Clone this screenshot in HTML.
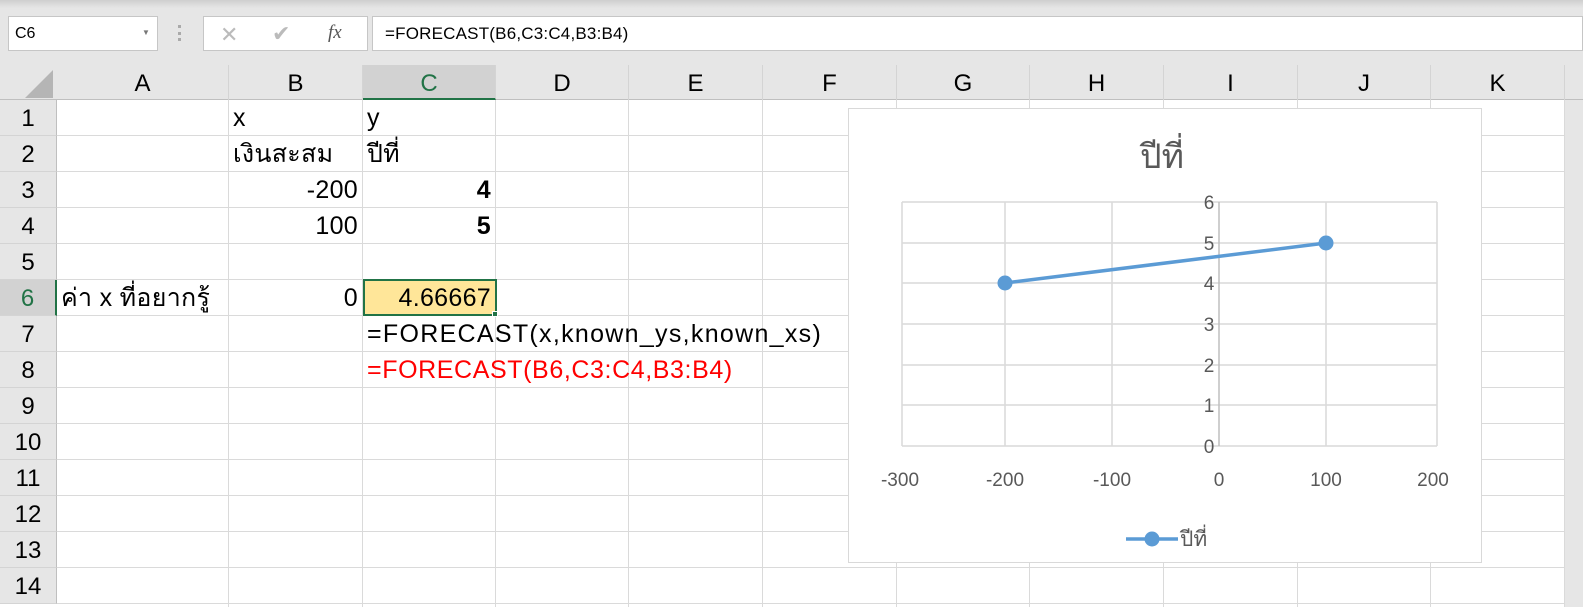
<!DOCTYPE html>
<html><head><meta charset="utf-8"><style>
*{margin:0;padding:0;box-sizing:border-box}
body{width:1583px;height:607px;overflow:hidden;background:#fff;font-family:"Liberation Sans",sans-serif;position:relative}
.a{position:absolute}
.t{position:absolute;font-size:25px;line-height:36px;white-space:nowrap;color:#000;letter-spacing:0.3px}
.ch{position:absolute;top:65px;height:35px;font-size:24px;line-height:37px;text-align:center;color:#000;border-right:1px solid #d4d4d4}
.rh{position:absolute;left:0;width:57px;height:36px;font-size:24px;line-height:37px;text-align:center;background:#e6e6e6;border-bottom:1px solid #d4d4d4;border-right:1px solid #bfbfbf}
</style></head><body>
<div class="a" style="left:0;top:0;width:1583px;height:65px;background:#e6e6e6"></div>
<div class="a" style="left:0;top:0;width:1583px;height:8px;background:linear-gradient(#cfcfcf,#e6e6e6)"></div>
<div class="a" style="left:8px;top:16px;width:150px;height:35px;background:#fff;border:1px solid #c6c6c6;font-size:16px;line-height:33px;padding-left:6px">C6<span style="position:absolute;left:133px;top:-1px;font-size:8px;color:#777">▼</span></div>
<div class="a" style="left:178px;top:25px;width:3px;height:16px;border-left:3px dotted #aaa"></div>
<div class="a" style="left:203px;top:16px;width:165px;height:35px;background:#fff;border:1px solid #c6c6c6"></div>
<div class="a" style="left:220px;top:22px;font-size:22px;color:#bbb">✕</div>
<div class="a" style="left:272px;top:21px;font-size:22px;color:#bbb">✔</div>
<div class="a" style="left:328px;top:22px;font-family:'Liberation Serif',serif;font-style:italic;font-size:19px;color:#555">fx</div>
<div class="a" style="left:372px;top:16px;width:1211px;height:35px;background:#fff;border:1px solid #c6c6c6;font-size:17px;line-height:33px;padding-left:12px;letter-spacing:0.2px">=FORECAST(B6,C3:C4,B3:B4)</div>
<div class="a" style="left:0;top:65px;width:1583px;height:35px;background:#e6e6e6;border-bottom:1px solid #bfbfbf"></div>
<div class="a" style="left:1565px;top:100px;width:18px;height:507px;background:#e6e6e6"></div>
<svg class="a" style="left:20px;top:70px" width="34" height="28"><polygon points="33,0 33,28 5,28" fill="#b5b5b5"/></svg>
<div class="ch" style="left:57px;width:172px">A</div>
<div class="ch" style="left:229px;width:134px">B</div>
<div class="ch" style="left:363px;width:133px;background:#d2d2d2;color:#217346;border-bottom:2px solid #217346">C</div>
<div class="ch" style="left:496px;width:133px">D</div>
<div class="ch" style="left:629px;width:134px">E</div>
<div class="ch" style="left:763px;width:134px">F</div>
<div class="ch" style="left:897px;width:133px">G</div>
<div class="ch" style="left:1030px;width:134px">H</div>
<div class="ch" style="left:1164px;width:134px">I</div>
<div class="ch" style="left:1298px;width:133px">J</div>
<div class="ch" style="left:1431px;width:134px">K</div>
<svg class="a" style="left:57px;top:100px" width="1508" height="507">
<g stroke="#dadada" stroke-width="1">
<line x1="171.5" y1="0" x2="171.5" y2="507"/><line x1="305.5" y1="0" x2="305.5" y2="507"/><line x1="438.5" y1="0" x2="438.5" y2="507"/><line x1="571.5" y1="0" x2="571.5" y2="507"/><line x1="705.5" y1="0" x2="705.5" y2="507"/><line x1="839.5" y1="0" x2="839.5" y2="507"/><line x1="972.5" y1="0" x2="972.5" y2="507"/><line x1="1106.5" y1="0" x2="1106.5" y2="507"/><line x1="1240.5" y1="0" x2="1240.5" y2="507"/><line x1="1373.5" y1="0" x2="1373.5" y2="507"/><line x1="1507.5" y1="0" x2="1507.5" y2="507"/>
<line x1="0" y1="35.5" x2="1508" y2="35.5"/><line x1="0" y1="71.5" x2="1508" y2="71.5"/><line x1="0" y1="107.5" x2="1508" y2="107.5"/><line x1="0" y1="143.5" x2="1508" y2="143.5"/><line x1="0" y1="179.5" x2="1508" y2="179.5"/><line x1="0" y1="215.5" x2="1508" y2="215.5"/><line x1="0" y1="251.5" x2="1508" y2="251.5"/><line x1="0" y1="287.5" x2="1508" y2="287.5"/><line x1="0" y1="323.5" x2="1508" y2="323.5"/><line x1="0" y1="359.5" x2="1508" y2="359.5"/><line x1="0" y1="395.5" x2="1508" y2="395.5"/><line x1="0" y1="431.5" x2="1508" y2="431.5"/><line x1="0" y1="467.5" x2="1508" y2="467.5"/><line x1="0" y1="503.5" x2="1508" y2="503.5"/>
</g></svg>
<div class="rh" style="top:100px">1</div><div class="rh" style="top:136px">2</div><div class="rh" style="top:172px">3</div><div class="rh" style="top:208px">4</div><div class="rh" style="top:244px">5</div><div class="rh" style="top:280px;background:#d2d2d2;color:#217346;border-right:2px solid #217346">6</div><div class="rh" style="top:316px">7</div><div class="rh" style="top:352px">8</div><div class="rh" style="top:388px">9</div><div class="rh" style="top:424px">10</div><div class="rh" style="top:460px">11</div><div class="rh" style="top:496px">12</div><div class="rh" style="top:532px">13</div><div class="rh" style="top:568px">14</div>
<div class="t" style="left:233px;top:100px">x</div>
<div class="t" style="left:367px;top:100px">y</div>
<div class="t" style="left:233px;top:136px">เงินสะสม</div>
<div class="t" style="left:367px;top:136px">ปีที่</div>
<div class="t" style="left:229px;top:172px;width:129px;text-align:right">-200</div>
<div class="t" style="left:363px;top:172px;width:128px;text-align:right;font-weight:bold">4</div>
<div class="t" style="left:229px;top:208px;width:129px;text-align:right">100</div>
<div class="t" style="left:363px;top:208px;width:128px;text-align:right;font-weight:bold">5</div>
<div class="t" style="left:61px;top:280px">ค่า x ที่อยากรู้</div>
<div class="t" style="left:229px;top:280px;width:129px;text-align:right">0</div>
<div class="a" style="left:363px;top:279px;width:134px;height:37px;background:#ffe699;border:2px solid #217346"></div>
<div class="a" style="left:492px;top:311px;width:6px;height:6px;background:#217346;border:1px solid #fff"></div>
<div class="t" style="left:363px;top:280px;width:128px;text-align:right">4.66667</div>
<div class="t" style="left:367px;top:316px;letter-spacing:1.3px">=FORECAST(x,known_ys,known_xs)</div>
<div class="t" style="left:367px;top:352px;color:#f00;letter-spacing:0.6px">=FORECAST(B6,C3:C4,B3:B4)</div>
<svg class="a" style="left:848px;top:108px" width="634" height="455" font-family="Liberation Sans,sans-serif">
<rect x="0.5" y="0.5" width="633" height="454" fill="#fff" stroke="#d9d9d9"/>
<text x="314" y="60" font-size="34" fill="#595959" text-anchor="middle">ปีที่</text>
<g stroke="#d9d9d9" stroke-width="1.5">
<line x1="54" y1="94" x2="589" y2="94"/><line x1="54" y1="135" x2="589" y2="135"/><line x1="54" y1="175" x2="589" y2="175"/><line x1="54" y1="216" x2="589" y2="216"/><line x1="54" y1="257" x2="589" y2="257"/><line x1="54" y1="297" x2="589" y2="297"/><line x1="54" y1="338" x2="589" y2="338"/>
<line x1="54" y1="94" x2="54" y2="338"/><line x1="157" y1="94" x2="157" y2="338"/><line x1="264" y1="94" x2="264" y2="338"/><line x1="478" y1="94" x2="478" y2="338"/><line x1="589" y1="94" x2="589" y2="338"/>
</g>
<line x1="371" y1="94" x2="371" y2="338" stroke="#bfbfbf" stroke-width="1.5"/>
<g font-size="19" fill="#595959" text-anchor="middle">
<text x="361" y="101">6</text><text x="361" y="142">5</text><text x="361" y="182">4</text><text x="361" y="223">3</text><text x="361" y="264">2</text><text x="361" y="304">1</text><text x="361" y="345">0</text>
<text x="52" y="378">-300</text><text x="157" y="378">-200</text><text x="264" y="378">-100</text><text x="371" y="378">0</text><text x="478" y="378">100</text><text x="585" y="378">200</text>
</g>
<line x1="157" y1="175" x2="478" y2="135" stroke="#5b9bd5" stroke-width="3.5"/>
<circle cx="157" cy="175" r="7.5" fill="#5b9bd5"/><circle cx="478" cy="135" r="7.5" fill="#5b9bd5"/>
<line x1="278" y1="431" x2="330" y2="431" stroke="#5b9bd5" stroke-width="3.5"/><circle cx="304" cy="431" r="7.5" fill="#5b9bd5"/>
<text x="332" y="438" font-size="21" fill="#595959">ปีที่</text>
</svg>
</body></html>
